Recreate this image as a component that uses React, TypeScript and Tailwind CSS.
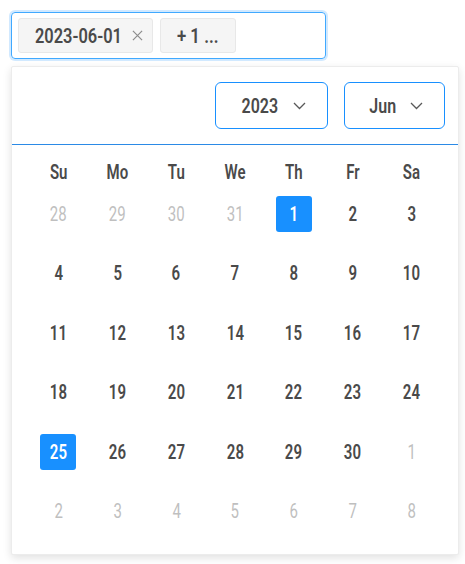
const font = {
  fontFamily: 'Roboto, "Liberation Sans", sans-serif',
};

const weekDays = ["Su", "Mo", "Tu", "We", "Th", "Fr", "Sa"];

type Day = { n: number; muted?: boolean; selected?: boolean };

const days: Day[] = [
  { n: 28, muted: true },
  { n: 29, muted: true },
  { n: 30, muted: true },
  { n: 31, muted: true },
  ...Array.from({ length: 30 }, (_, i) => ({ n: i + 1, selected: i + 1 === 1 || i + 1 === 25 })),
  ...Array.from({ length: 8 }, (_, i) => ({ n: i + 1, muted: true })),
];

// condensed look: Roboto squeezed horizontally
const narrow = "inline-block whitespace-nowrap scale-x-[0.75]";

function Chevron() {
  return (
    <svg width="13" height="8" viewBox="0 0 13 8" fill="none" stroke="#595959" strokeWidth="1.3">
      <path d="M1 1l5.5 5.5L12 1" />
    </svg>
  );
}

export default function App() {
  return (
    <div className="min-h-[564px] w-[465px] bg-white pl-[11px] pt-[12px]" style={font}>
      {/* input with tags */}
      <div className="flex h-[47px] w-[315px] items-center gap-[7px] rounded-[4px] border border-[#40a9ff] pl-[6px] shadow-[0_0_0_2px_rgba(24,144,255,0.2)]">
        <span className="flex h-[35px] w-[135px] items-center rounded-[3px] border border-[#e8e8e8] bg-[#f5f5f5] pl-[16px] pr-[9px] text-[20px] font-semibold text-[#4a4a4a]">
          <span className="inline-block w-[85px] origin-left whitespace-nowrap scale-x-[0.82]">2023-06-01</span>
          <svg className="ml-auto" width="11" height="11" viewBox="0 0 12 12" stroke="#8c8c8c" strokeWidth="1.3">
            <path d="M1 1l10 10M11 1L1 11" />
          </svg>
        </span>
        <span className="flex h-[35px] w-[76px] items-center justify-center rounded-[3px] border border-[#e8e8e8] bg-[#f5f5f5] text-[20px] font-semibold text-[#4a4a4a]">
          <span className="inline-block whitespace-nowrap scale-x-[0.84]">+ 1 ...</span>
        </span>
      </div>

      {/* dropdown panel */}
      <div className="mt-[7px] w-[448px] rounded-[2px] border border-[#ececec] bg-white shadow-[0_3px_8px_rgba(0,0,0,0.12)]">
        <div className="flex justify-end gap-[16px] border-b border-[#2b8ae6] pb-[15px] pr-[13px] pt-[15px]">
          <button className="flex h-[47px] w-[113px] items-center justify-center gap-[10px] rounded-[6px] border border-[#1890ff] text-[20px] font-semibold text-[#4a4a4a]">
            <span className="inline-block scale-x-[0.8]">2023</span>
            <Chevron />
          </button>
          <button className="flex h-[47px] w-[101px] items-center justify-center gap-[10px] rounded-[6px] border border-[#1890ff] text-[20px] font-semibold text-[#4a4a4a]">
            <span className="inline-block scale-x-[0.8]">Jun</span>
            <Chevron />
          </button>
        </div>

        <div className="px-[17px] pb-[25px] pt-[9px]">
          <div className="grid grid-cols-7">
            {weekDays.map((d) => (
              <div key={d} className="flex h-9 items-center justify-center text-[20px] font-semibold text-[#4a4a4a]">
                <span className={narrow}>{d}</span>
              </div>
            ))}
          </div>
          <div className="mt-[6px] grid grid-cols-7 gap-y-[23.4px]">
            {days.map((d, i) => (
              <div key={i} className="flex justify-center">
                <div
                  className={
                    d.selected
                      ? "flex h-9 w-9 items-center justify-center rounded-[3px] bg-[#1890ff] text-[20px] font-semibold text-white"
                      : d.muted
                        ? "flex h-9 w-9 items-center justify-center text-[20px] text-[#bfbfbf]"
                        : "flex h-9 w-9 items-center justify-center text-[20px] font-semibold text-[#4a4a4a]"
                  }
                >
                  <span className={narrow}>{d.n}</span>
                </div>
              </div>
            ))}
          </div>
        </div>
      </div>
    </div>
  );
}
